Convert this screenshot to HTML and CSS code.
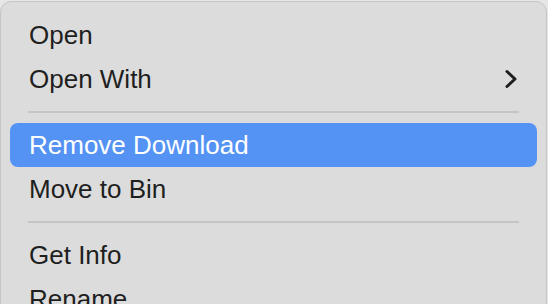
FILE: index.html
```html
<!DOCTYPE html>
<html>
<head>
<meta charset="utf-8">
<link rel="stylesheet" href="styles.css">
</head>
<body>
<div class="menu">
  <div class="item">Open</div>
  <div class="item has-sub">Open With
    <svg class="chev" width="14" height="20" viewBox="0 0 14 20"><path d="M3 2.5 L11 10 L3 17.5" fill="none" stroke="#1e1e1e" stroke-width="3" stroke-linecap="round" stroke-linejoin="round"/></svg>
  </div>
  <div class="sep"></div>
  <div class="item active">Remove Download</div>
  <div class="item">Move to Bin</div>
  <div class="sep"></div>
  <div class="item">Get Info</div>
  <div class="item">Rename</div>
  <div class="item">Compress</div>
</div>
</body>
</html>
```
FILE: styles.css
```css
html, body {
  margin: 0;
  padding: 0;
  height: 304px;
  overflow: hidden;
  background: #e6e6e6;
}
body {
  font-family: "Liberation Sans", Arial, sans-serif;
}
.menu {
  margin-top: 1px;
  width: 545px;
  background: #dcdcdc;
  border: 1px solid #c6c6c6;
  border-radius: 11px;
  padding: 11px 9px 12px 9px;
  box-sizing: content-box;
  width: 527px;
}
.item {
  height: 44px;
  line-height: 45px;
  font-size: 26px;
  color: #1f1f1f;
  padding-left: 19px;
  padding-right: 19px;
  border-radius: 8px;
  display: flex;
  align-items: center;
  justify-content: space-between;
  white-space: nowrap;
}
.item.active {
  background: #5493f3;
  color: #ffffff;
}
.chev {
  display: block;
  margin-right: 0;
}
.sep {
  height: 2px;
  background: #c5c5c5;
  margin: 10px 18px;
}
```
